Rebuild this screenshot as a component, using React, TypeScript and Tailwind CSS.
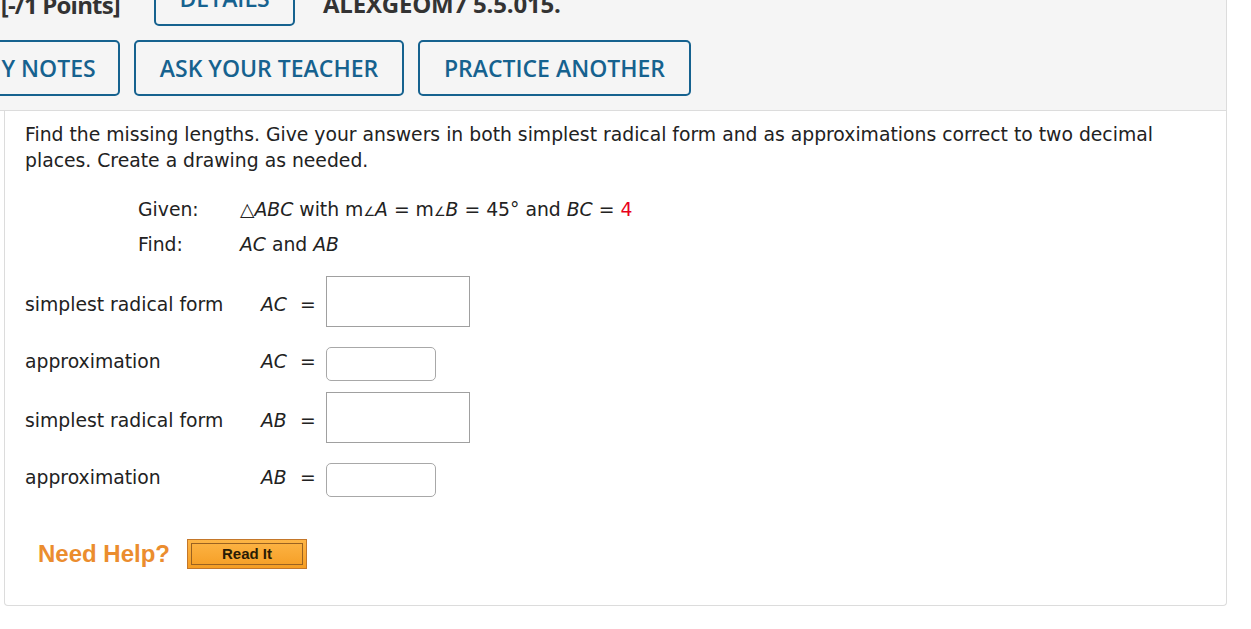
import React from 'react';

const btn =
  "flex items-center justify-center h-[56px] border-2 border-[#16628f] rounded-[5px] text-[#16628f] text-[23px] font-semibold font-['Open_Sans',sans-serif] shrink-0";

const rows = [
  { label: 'simplest radical form', v: 'AC', big: true, mt: '' },
  { label: 'approximation', v: 'AC', big: false, mt: 'mt-[20px]' },
  { label: 'simplest radical form', v: 'AB', big: true, mt: 'mt-[11px]' },
  { label: 'approximation', v: 'AB', big: false, mt: 'mt-[20px]' },
];

function Angle() {
  return <span className="text-[13px]">∠</span>;
}

export default function App() {
  return (
    <div className="w-[1251px] h-[629px] bg-white overflow-hidden font-['DejaVu_Sans',Verdana,sans-serif] text-[#222]">
      {/* Header */}
      <div className="w-[1227px] bg-[#f5f5f5] border-r border-b border-[#dcdcdc] pb-[14px]">
        <div className="flex items-end h-[56px] -mt-[30px] font-['Open_Sans',sans-serif] text-[24px] font-bold text-[#333]">
          <div className="w-[120px] mb-[3px] flex justify-end whitespace-nowrap shrink-0 tracking-[-0.8px]">[-/1 Points]</div>
          <div className={`${btn} ml-[34px] w-[141px]`}>DETAILS</div>
          <div className="ml-[28px] mb-[4px] whitespace-nowrap tracking-[-0.2px]">ALEXGEOM7 5.5.015.</div>
        </div>
        <div className="flex gap-[14px] mt-[14px] -ml-[44px]">
          <div className={`${btn} w-[164px]`}>MY NOTES</div>
          <div className={`${btn} w-[270px]`}>ASK YOUR TEACHER</div>
          <div className={`${btn} w-[273px]`}>PRACTICE ANOTHER</div>
        </div>
      </div>

      {/* Question */}
      <div className="ml-[4px] w-[1223px] h-[495px] border-x border-b border-[#dcdcdc] rounded-b-[4px] pl-[20px] pt-[11px] text-[18.8px]">
        <p className="leading-[26px]">
          Find the missing lengths. Give your answers in both simplest radical form and as approximations correct to two decimal
          <br />
          places. Create a drawing as needed.
        </p>

        <div className="grid grid-cols-[102px_auto] gap-y-[7px] mt-[23px] ml-[113px] leading-[26px]">
          <span>Given:</span>
          <span>
            △<i>ABC</i> with m<Angle /><i>A</i> = m<Angle /><i>B</i> = 45° and <i>BC</i> ={' '}
            <span className="text-[#e8001c]">4</span>
          </span>
          <span>Find:</span>
          <span>
            <i>AC</i> and <i>AB</i>
          </span>
        </div>

        <div className="mt-[18px]">
          {rows.map((r, i) => (
            <div key={i} className={`flex items-center ${r.mt}`}>
              <div className={`flex items-center ${r.big ? 'pt-[7px]' : 'pb-[4px]'}`}>
                <span className="w-[236px]">{r.label}</span>
                <span className="w-[39px] italic">{r.v}</span>
                <span>=</span>
              </div>
              {r.big ? (
                <div className="ml-[10px] w-[144px] h-[51px] border border-[#a0a0a0] bg-white" />
              ) : (
                <div className="ml-[10px] w-[110px] h-[34px] border border-[#a8a8a8] rounded-[5px] bg-white" />
              )}
            </div>
          ))}
        </div>

        <div className="flex items-center mt-[39px] ml-[13px]">
          <span className="font-['Liberation_Sans',Arial,sans-serif] font-bold text-[24px] text-[#eb8d2e]">Need Help?</span>
          <div className="ml-[17px] w-[120px] h-[30px] border border-[#c4772a] bg-gradient-to-b from-[#fdb545] to-[#f59d22] p-[3px]">
            <div className="h-full border border-[#9a6221] flex items-center justify-center font-['Liberation_Sans',Arial,sans-serif] font-bold text-[15px] text-[#2a1c05]">
              Read It
            </div>
          </div>
        </div>
      </div>
    </div>
  );
}
